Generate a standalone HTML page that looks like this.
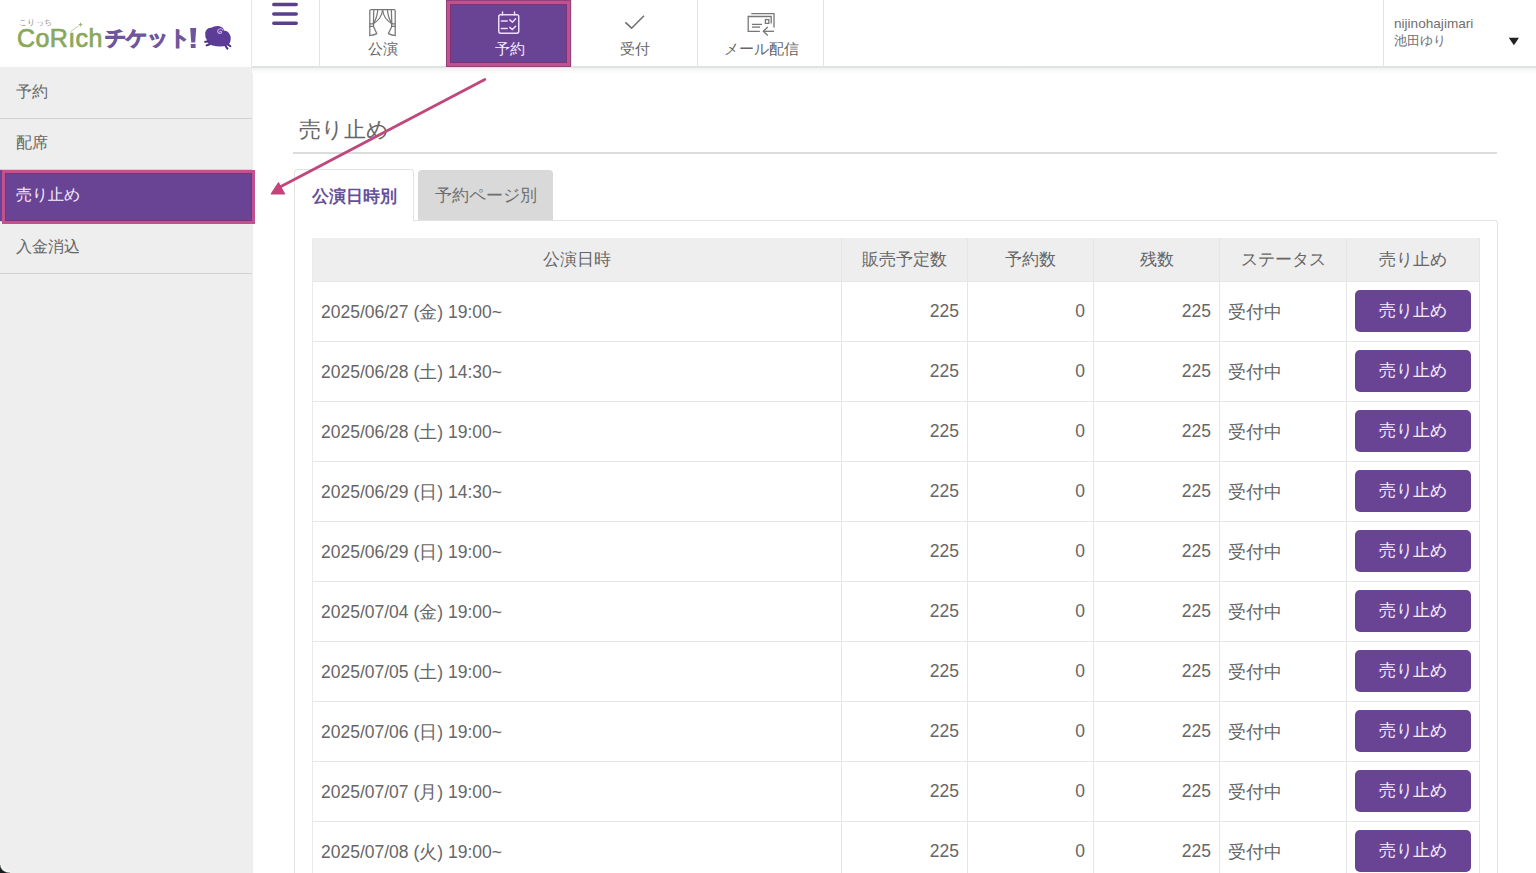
<!DOCTYPE html>
<html><head><meta charset="utf-8">
<style>
*{box-sizing:border-box;margin:0;padding:0}
html,body{width:1536px;height:873px;overflow:hidden;background:#fff;font-family:"Liberation Sans",sans-serif;color:#666}
.abs{position:absolute}
#logo{left:0;top:0;width:252px;height:67px;background:#fff}
#side{left:0;top:67px;width:253px;height:806px;background:#eee}
.si{position:absolute;left:0;width:252px;height:52px;border-bottom:1.5px solid #d2d2d2;font-size:16px;color:#666;padding-left:16px;line-height:50px}
#hdr{left:252px;top:0;width:1284px;height:66px;background:#fff}
#hdrb{left:252px;top:66px;width:1284px;height:2px;background:#dfe3e3}
#hdrs{left:252px;top:68px;width:1284px;height:5px;background:linear-gradient(#f1f2f2,#fdfdfd)}
.vsep{position:absolute;top:0;width:1px;height:66px;background:#e3e3e3}
.nav{position:absolute;top:0;width:126px;height:66px;text-align:center;font-size:14.5px;color:#666}
.nav .lbl{position:absolute;left:1px;width:126px;top:40px;line-height:18px}
.ham{position:absolute;left:272px;width:26px;height:3.6px;border-radius:2px;background:#5d3e8e}
#title{left:299px;top:115px;font-size:22px;color:#666;line-height:30px}
#hr{left:293px;top:152px;width:1204px;height:1.5px;background:#dcdcdc}
#panel{left:294px;top:220px;width:1204px;height:700px;border:1px solid #e3e3e3;border-radius:0 3px 0 0}
.tab{position:absolute;top:169px;height:52px;font-size:16px;line-height:52px;text-align:center;border-radius:4px 4px 0 0}
table{position:absolute;left:312px;top:238px;width:1168px;border-collapse:collapse;border-right:1px solid #e6e6e6;border-left:1px solid #eaeaea;font-size:17px;color:#666}
th{height:43px;background:#eee;font-weight:normal;text-align:center;border-left:1px solid #e6e6e6}
td{height:60px;border-left:1px solid #e6e6e6;border-top:1px solid #e6e6e6;padding:1px 8px 0 8px;font-size:17.5px}
th:first-child,td:first-child{border-left:none}
td.r{text-align:right}
.btn{display:block;margin:-1px auto 0;width:116px;height:42px;border-radius:5px;background:#6a4494;color:#f3ecff;font-size:17px;line-height:42px;text-align:center}
</style></head><body>
<div id="logo" class="abs"></div>
<div class="abs" style="left:19px;top:17.5px;font-size:8px;line-height:9px;color:#8a8a8a;letter-spacing:0.3px">こりっち</div>
<div class="abs" style="left:17px;top:21px;font-size:25px;line-height:34px;color:#89a85b;letter-spacing:0.4px;-webkit-text-stroke:0.7px #89a85b">CoRıch</div>
<svg class="abs" style="left:66px;top:20px" width="20" height="14" viewBox="0 0 20 14"><path d="M4.5 11.5 L12.5 6" stroke="#b8c9a0" stroke-width="0.9"/><path d="M14.5 2.2 L15.3 4 L17 4.6 L15.3 5.3 L14.5 7 L13.7 5.3 L12 4.6 L13.7 4 Z" fill="#9db47a"/></svg>
<div class="abs" style="left:105px;top:22px;font-size:21px;line-height:32px;color:#6f559b;letter-spacing:-0.8px;-webkit-text-stroke:1.8px #6f559b">チケット</div>
<svg class="abs" style="left:188px;top:26px" width="10" height="24" viewBox="0 0 10 24"><path d="M2.2 2 H8.2 L7.2 16.5 H3.2 Z" fill="#6f559b"/><rect x="2.8" y="18" width="4.8" height="4" fill="#6f559b"/></svg>
<svg class="abs" style="left:200px;top:20px" width="36" height="32" viewBox="0 0 36 32">
<path d="M5.2 12.5 Q6.5 8 11 7.8 Q15 5.6 19.5 6.2 Q23.5 7.2 24 10.6 Q28.8 10.8 30.6 16.5 Q31.6 22.6 27.2 25.6 Q20 27.4 12.5 25.6 Q7.5 24.6 6.6 19.6 Q4.8 17 5.2 12.5 Z" fill="#5d3c98"/>
<path d="M5.2 21.8 L8.2 21.4 M6.6 25.4 L9.6 24.2 M25.6 26 L27.4 28.6 M28.2 24.6 L30.4 26.2" stroke="#4a2f7e" stroke-width="2" stroke-linecap="round"/>
<path d="M19.6 12.2 a1 1 0 1 1 1.2 1.1 a2.4 2.4 0 0 1 -3.2 -2.3 a3 3 0 0 1 5.6 -0.6" stroke="#c7a8ee" stroke-width="1.1" fill="none"/>
</svg>
<div id="side" class="abs">
  <div class="si" style="top:0">予約</div>
  <div class="si" style="top:51px">配席</div>
  <div class="si" style="top:103px;background:#6a4494;color:#f5eeff">売り止め</div>
  <div class="si" style="top:155px">入金消込</div>
</div>
<div id="hdr" class="abs"></div><div id="hdrb" class="abs"></div><div id="hdrs" class="abs"></div>
<svg class="abs" style="left:268px;top:0" width="34" height="30" viewBox="0 0 34 30" stroke="#5b3f8c" stroke-width="3.5" stroke-linecap="round"><path d="M5.8 4.5 H28.2 M5.8 14 H28.2 M5.8 23.3 H28.2"/></svg>
<div class="abs" style="left:251px;top:0;width:1px;height:67px;background:#e6e6e6"></div>
<div class="vsep" style="left:319px"></div>
<div class="nav" style="left:319px"><div class="lbl">公演</div></div>
<div class="nav" style="left:446px;width:125px;background:#6a4494;color:#f5eeff"><div class="lbl">予約</div></div>
<div class="vsep" style="left:571px"></div>
<div class="nav" style="left:571px"><div class="lbl">受付</div></div>
<div class="vsep" style="left:697px"></div>
<div class="nav" style="left:697px"><div class="lbl">メール配信</div></div>
<svg class="abs" style="left:364px;top:5px" width="36" height="35" viewBox="0 0 36 35" fill="none" stroke="#777" stroke-width="1.25" stroke-linejoin="round" stroke-linecap="round">
<path d="M5.8 30.5 V5.8 Q5.8 4.6 7 4.6 H30 Q31.2 4.6 31.2 5.8 V30.5"/>
<path d="M18.6 4.8 Q17.6 14 9.4 18.6"/><path d="M13.8 5 Q13 13 9.4 18.6"/><path d="M9.8 5 Q9.6 13 9.4 18.6"/>
<path d="M18.6 4.8 Q19.6 14 27.8 18.6"/><path d="M23.4 5 Q24.2 13 27.8 18.6"/><path d="M27.4 5 Q27.6 13 27.8 18.6"/>
<path d="M5.8 18.8 H9.6 V21.3 H5.8"/><path d="M31.2 18.8 H27.6 V21.3 H31.2"/>
<path d="M9.4 21.4 L12.8 28.6 Q9 30.4 5.8 30.5"/><path d="M27.8 21.4 L24.4 28.6 Q28.2 30.4 31.4 30.5"/>
</svg>
<svg class="abs" style="left:493px;top:8px" width="32" height="30" viewBox="0 0 32 30" fill="none" stroke="#ecdcff" stroke-width="1.5" stroke-linejoin="round" stroke-linecap="round">
<rect x="5.75" y="6.75" width="20" height="18.4" rx="1.8"/>
<path d="M9.5 4 V7"/><path d="M21.5 4 V7"/>
<path d="M8.4 12.9 H14.2"/><path d="M8.4 20.4 H14.2"/>
<path d="M16.8 11.9 L19.4 14.2 L22.6 10.8"/><path d="M16.8 19.4 L19.4 21.6 L22.6 18.2"/>
</svg>
<svg class="abs" style="left:620px;top:10px" width="30" height="24" viewBox="0 0 30 24" fill="none" stroke="#707070" stroke-width="1.6" stroke-linejoin="miter" stroke-linecap="butt">
<path d="M5.4 12.3 L11.6 18.2 L24 5.8"/>
</svg>
<svg class="abs" style="left:744px;top:10px" width="34" height="28" viewBox="0 0 34 28" fill="none" stroke="#777" stroke-width="1.3" stroke-linecap="butt">
<path d="M7.3 3.7 H30 V17.5"/>
<path d="M15.9 21.3 H4.2 V6.5 H27.2 V13.4"/>
<rect x="21.4" y="9.6" width="3.4" height="3.8"/>
<path d="M8 14.4 H18"/><path d="M8 17.1 H16"/>
<path d="M19.3 21.3 H30"/><path d="M23.8 17.1 L19.3 21.3 L23.8 25.4"/>
</svg>
<div class="vsep" style="left:823px"></div>
<div class="vsep" style="left:1383px"></div>
<div class="abs" style="left:1394px;top:15.5px;font-size:13.6px;line-height:16px;color:#707070">nijinohajimari</div>
<div class="abs" style="left:1394px;top:33px;font-size:12.5px;line-height:16px;color:#707070">池田ゆり</div>

<div id="title" class="abs">売り止め</div>
<div id="hr" class="abs"></div>
<div id="panel" class="abs"></div>
<div class="tab" style="left:294px;width:120px;background:#fff;border:1px solid #e3e3e3;border-bottom:none;color:#65509a;font-weight:bold;font-size:16.5px">公演日時別</div>
<div class="tab" style="left:418px;width:135px;background:#d9d9d9;color:#6e6e6e;top:170px;height:50px;line-height:52px;font-size:16.6px">予約ページ別</div>

<table>
<tr><th style="width:529px">公演日時</th><th style="width:126px">販売予定数</th><th style="width:126px">予約数</th><th style="width:126px">残数</th><th style="width:127px">ステータス</th><th>売り止め</th></tr>
<tr><td>2025/06/27 (金) 19:00~</td><td class="r">225</td><td class="r">0</td><td class="r">225</td><td>受付中</td><td><div class="btn">売り止め</div></td></tr>
<tr><td>2025/06/28 (土) 14:30~</td><td class="r">225</td><td class="r">0</td><td class="r">225</td><td>受付中</td><td><div class="btn">売り止め</div></td></tr>
<tr><td>2025/06/28 (土) 19:00~</td><td class="r">225</td><td class="r">0</td><td class="r">225</td><td>受付中</td><td><div class="btn">売り止め</div></td></tr>
<tr><td>2025/06/29 (日) 14:30~</td><td class="r">225</td><td class="r">0</td><td class="r">225</td><td>受付中</td><td><div class="btn">売り止め</div></td></tr>
<tr><td>2025/06/29 (日) 19:00~</td><td class="r">225</td><td class="r">0</td><td class="r">225</td><td>受付中</td><td><div class="btn">売り止め</div></td></tr>
<tr><td>2025/07/04 (金) 19:00~</td><td class="r">225</td><td class="r">0</td><td class="r">225</td><td>受付中</td><td><div class="btn">売り止め</div></td></tr>
<tr><td>2025/07/05 (土) 19:00~</td><td class="r">225</td><td class="r">0</td><td class="r">225</td><td>受付中</td><td><div class="btn">売り止め</div></td></tr>
<tr><td>2025/07/06 (日) 19:00~</td><td class="r">225</td><td class="r">0</td><td class="r">225</td><td>受付中</td><td><div class="btn">売り止め</div></td></tr>
<tr><td>2025/07/07 (月) 19:00~</td><td class="r">225</td><td class="r">0</td><td class="r">225</td><td>受付中</td><td><div class="btn">売り止め</div></td></tr>
<tr><td>2025/07/08 (火) 19:00~</td><td class="r">225</td><td class="r">0</td><td class="r">225</td><td>受付中</td><td><div class="btn">売り止め</div></td></tr>
</table>
<svg class="abs" style="left:1508px;top:37px" width="12" height="9" viewBox="0 0 12 9"><path d="M0.8 0.8 H11 L5.9 8.2 Z" fill="#222"/></svg>
<div class="abs" style="left:446px;top:0;width:125px;height:67px;border:1px solid #93407c;box-shadow:inset 0 0 0 3px #c0528f,inset 0 0 0 4px #7c3475"></div>
<div class="abs" style="left:2px;top:170px;width:253px;height:54px;border:3.5px solid #c0528f;box-shadow:inset 0 0 0 1px #7c3475"></div>
<svg class="abs" style="left:0;top:0" width="1536" height="873" viewBox="0 0 1536 873">
<line x1="484.8" y1="79.5" x2="280" y2="187" stroke="#c0477c" stroke-width="2.8" stroke-linecap="round"/>
<path d="M271 194 L278.5 182.5 L284.8 194 Z" fill="#c8417a" stroke="#c8417a" stroke-width="1" stroke-linejoin="round"/>
</svg>
<div class="abs" style="left:0;top:865px;width:10px;height:8px;background:radial-gradient(10px 8px at 10px 0,rgba(255,255,255,0) 70%,rgba(255,255,255,0.85) 88%,#151a1c 106%)"></div>
</body></html>
